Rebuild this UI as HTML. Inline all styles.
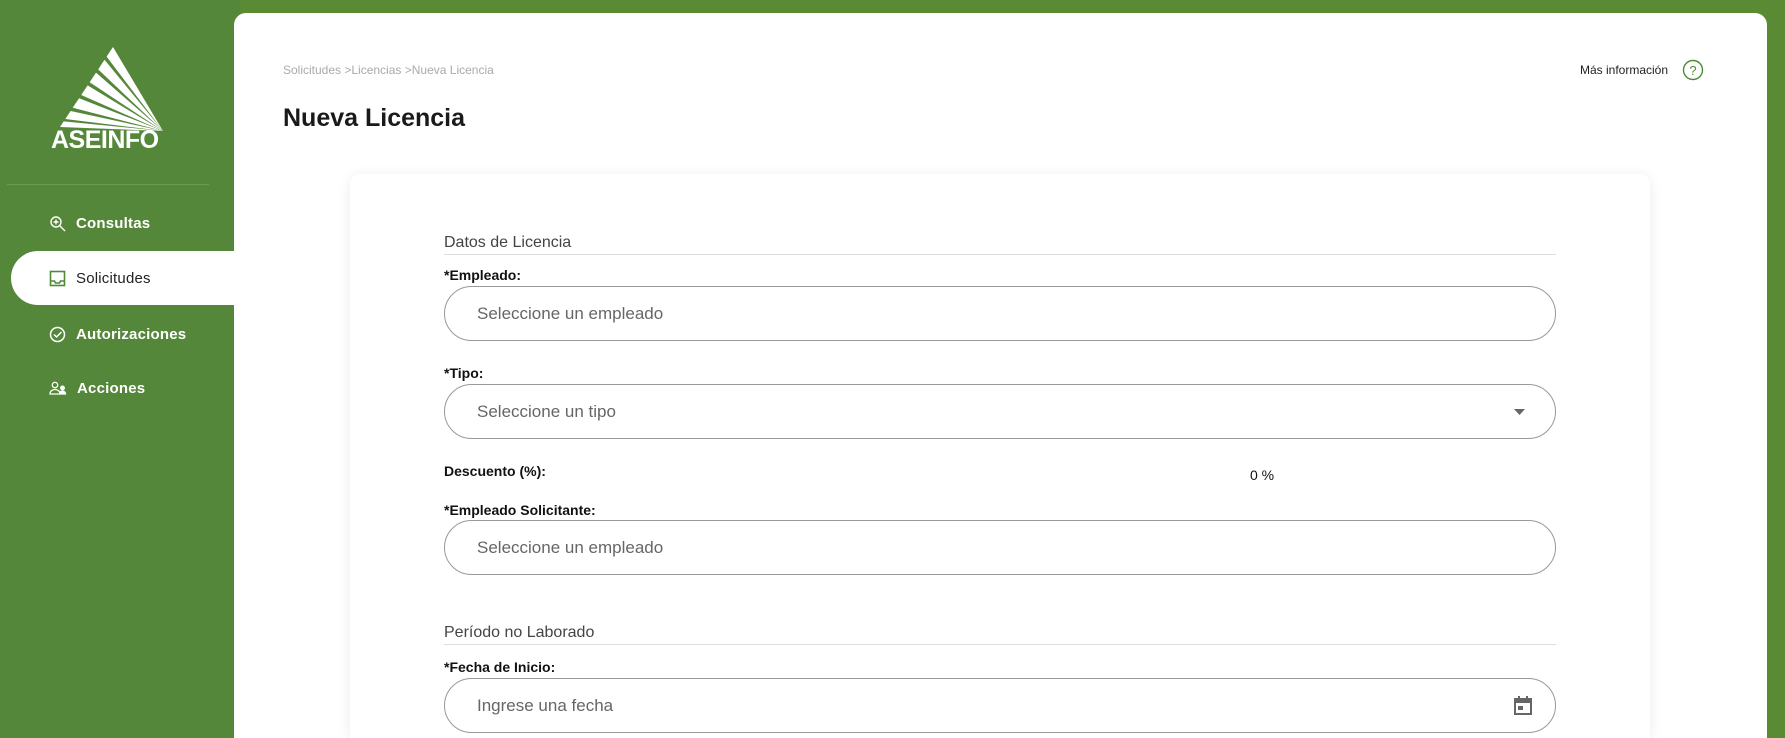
<!DOCTYPE html>
<html><head><meta charset="utf-8"><style>
*{box-sizing:border-box;margin:0;padding:0}
html,body{width:1785px;height:738px;overflow:hidden}
body{background:#5a8a34;font-family:"Liberation Sans",Arial,sans-serif;position:relative}
.sb{position:absolute;left:0;top:0;width:240px;height:738px;background:#55873a}
.div{position:absolute;left:7px;top:184px;width:202px;height:1px;background:#6f9a55}
.nav{position:absolute;left:49px;font-size:15px;color:#fff;display:flex;align-items:center;gap:10px;font-weight:bold;letter-spacing:.2px}
.pill{position:absolute;left:11px;top:251px;width:229px;height:54px;background:#fff;border-radius:27px 0 0 27px}
.main{position:absolute;left:234px;top:13px;width:1533px;height:725px;background:#fff;border-radius:12px 12px 0 0}
.abs{position:absolute}
.card{position:absolute;left:350px;top:174px;width:1300px;height:564px;background:#fff;border-radius:10px 10px 0 0;box-shadow:0 2px 14px rgba(0,0,0,.08)}
.sec{position:absolute;left:444px;width:1112px;font-size:16px;color:#444;font-weight:300;border-bottom:1px solid #ddd;padding-bottom:2px}
.lbl{position:absolute;left:444px;font-size:14px;font-weight:bold;color:#111}
.inp{position:absolute;left:444px;width:1112px;height:55px;border:1px solid #999;border-radius:28px;font-size:17px;color:#666;padding-left:32px;line-height:53px}
</style></head><body>
<div class="sb"></div>
<svg class="abs" style="left:50px;top:45px" width="116" height="106" viewBox="0 0 116 106">
<g fill="#fff">
<polygon points="63,2 56.6,11.6 113,86"/>
<polygon points="54.5,14.8 48.2,24.4 113,86"/>
<polygon points="46,27.6 39.7,37.2 113,86"/>
<polygon points="37.6,40.4 31.2,50 113,86"/>
<polygon points="29.1,53.2 22.7,62.8 113,86"/>
<polygon points="20.6,66 15.3,74 113,86"/>
<polygon points="13.7,76.4 10,82 113,86"/>
</g>
<text x="1" y="103" font-family="Liberation Sans" font-weight="bold" font-size="25" fill="#fff" letter-spacing="-0.5">ASEINFO</text>
</svg>
<div class="div"></div>
<div class="pill"></div>
<div class="nav" style="top:215px"><svg width="17" height="17" viewBox="0 0 17 17" fill="none" stroke="#fff" stroke-width="1.4"><circle cx="7" cy="7" r="5"/><path d="M11 11l5 5M7 4.5v5M4.5 7h5"/></svg>Consultas</div>
<div class="nav" style="top:270px;color:#222;font-weight:normal"><svg width="17" height="17" viewBox="0 0 17 17" fill="none" stroke="#4f8a35" stroke-width="1.6"><rect x="1.5" y="1.5" width="14" height="14"/><path d="M1.5 11h4l1 2h4l1-2h4"/></svg>Solicitudes</div>
<div class="nav" style="top:326px"><svg width="17" height="17" viewBox="0 0 17 17" fill="none" stroke="#fff" stroke-width="1.5"><circle cx="8.5" cy="8.5" r="7"/><path d="M5 8.5l2.5 2.5 5-5"/></svg>Autorizaciones</div>
<div class="nav" style="top:380px"><svg width="18" height="15" viewBox="0 0 18 15" fill="none" stroke="#fff" stroke-width="1.3"><circle cx="6" cy="4" r="2.7"/><path d="M1 13c0-3 2.5-4.5 5-4.5s5 1.5 5 4.5z"/><circle cx="13.5" cy="7" r="1.8" fill="#fff"/><path d="M10.5 13c.3-2 1.5-3 3-3s2.7 1 3 3z" fill="#fff"/></svg>Acciones</div>
<div class="main"></div>
<div class="abs" style="left:283px;top:63px;font-size:12px;color:#aaa">Solicitudes &gt;Licencias &gt;Nueva Licencia</div>
<div class="abs" style="left:283px;top:104px;font-size:25px;color:#1a1a1a;font-weight:bold">Nueva Licencia</div>
<div class="abs" style="left:1580px;top:63px;font-size:12px;color:#222">Más información</div>
<svg class="abs" style="left:1682px;top:59px" width="22" height="22" viewBox="0 0 22 22"><circle cx="11" cy="11" r="9.5" fill="none" stroke="#4f8a35" stroke-width="1.4"/><text x="11" y="16" text-anchor="middle" font-size="13" fill="#4f8a35" font-family="Liberation Sans">?</text></svg>
<div class="card"></div>
<div class="sec" style="top:234px">Datos de Licencia</div>
<div class="lbl" style="top:267px">*Empleado:</div>
<div class="inp" style="top:286px">Seleccione un empleado</div>
<div class="lbl" style="top:365px">*Tipo:</div>
<div class="inp" style="top:384px">Seleccione un tipo<svg class="abs" style="right:30px;top:24px" width="11" height="6"><path d="M0 0h11L5.5 6z" fill="#666"/></svg></div>
<div class="lbl" style="top:463px">Descuento (%):</div>
<div class="abs" style="left:1250px;top:467px;font-size:14px;color:#111">0 %</div>
<div class="lbl" style="top:502px">*Empleado Solicitante:</div>
<div class="inp" style="top:520px">Seleccione un empleado</div>
<div class="sec" style="top:624px">Período no Laborado</div>
<div class="lbl" style="top:659px">*Fecha de Inicio:</div>
<div class="inp" style="top:678px">Ingrese una fecha<svg class="abs" style="right:22px;top:16px" width="20" height="22" viewBox="0 0 20 22"><rect x="2" y="4" width="16" height="15" fill="none" stroke="#666" stroke-width="2"/><rect x="2" y="4" width="16" height="4" fill="#666"/><path d="M6 1v4M14 1v4" stroke="#666" stroke-width="2"/><rect x="5" y="11" width="5" height="4" fill="#666"/></svg></div>
</body></html>
